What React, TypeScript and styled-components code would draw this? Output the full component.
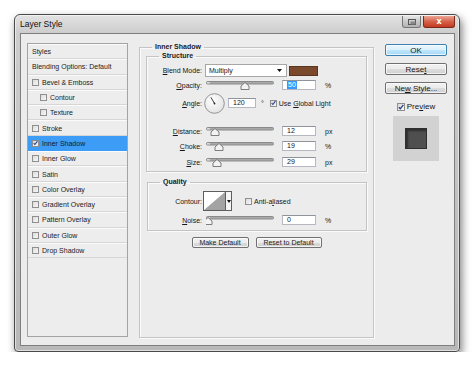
import React from "react";
import styled, { createGlobalStyle } from "styled-components";

const GlobalStyle = createGlobalStyle`
  html, body { margin: 0; padding: 0; background: #fff; }
  body { font-family: "Liberation Sans", Arial, sans-serif; color: #161616; }
  * { box-sizing: border-box; }
`;

const Page = styled.div`
  padding: 14px 0 0 14px;
`;

const Window = styled.div`
  width: 446px;
  height: 338px;
  display: flex;
  flex-direction: column;
  border: 1px solid #4a4a4a;
  border-radius: 6px 6px 4px 4px;
  background: linear-gradient(180deg, #e2e2e2 0px, #cdcdcd 18px, #b8b8b8 100%);
  box-shadow: inset 0 0 0 1px rgba(255, 255, 255, 0.55), 2px 4px 8px rgba(0, 0, 0, 0.5);
`;

const TitleBar = styled.div`
  height: 18px;
  display: flex;
  align-items: flex-start;
  padding: 0 4px 0 5px;
`;

const Title = styled.span`
  font-size: 8.5px;
  line-height: 18px;
  color: #111;
`;

const TitleButtons = styled.div`
  margin-left: auto;
  margin-top: 1px;
  display: flex;
  gap: 2px;
`;

const CaptionButton = styled.div<{ $close?: boolean }>`
  width: ${(p) => (p.$close ? "32px" : "19px")};
  height: 12px;
  border: 1px solid ${(p) => (p.$close ? "#7a2a1c" : "#777")};
  border-top: 0;
  border-radius: 0 0 3px 3px;
  background: ${(p) =>
    p.$close
      ? "linear-gradient(180deg, #eba493 0%, #d6624a 50%, #c43a22 100%)"
      : "linear-gradient(180deg, #e6e6e6 0%, #c9c9c9 50%, #b3b3b3 100%)"};
  display: flex;
  align-items: center;
  justify-content: center;
  color: #fff;
  font-family: "DejaVu Sans", sans-serif;
  font-weight: bold;
  font-size: 8px;
  line-height: 1;
`;

const Content = styled.div`
  flex: 1;
  margin: 0 4px 5px 5px;
  border: 1px solid #7f7f7f;
  background: #ececec;
  display: flex;
  align-items: flex-start;
  padding: 9px 0 0 6px;
`;

/* ---------- styles list ---------- */

const StylesPanel = styled.div`
  width: 101px;
  height: 294px;
  border: 1px solid #a3a3a3;
  background: #ededed;
  display: flex;
  flex-direction: column;
`;

const StyleRow = styled.div<{ $indent?: boolean; $selected?: boolean }>`
  height: 15.3px;
  flex: none;
  display: flex;
  align-items: center;
  gap: 3px;
  padding-left: ${(p) => (p.$indent ? "12px" : "4px")};
  font-size: 7px;
  color: ${(p) => (p.$selected ? "#0c1a3a" : "#222")};
  background: ${(p) => (p.$selected ? "#3d9cf5" : "transparent")};
  border-top: 1px solid ${(p) => (p.$selected ? "#3d9cf5" : "#fbfbfb")};
  border-bottom: 1px solid ${(p) => (p.$selected ? "#3d9cf5" : "#d6d6d6")};
`;

const Box = styled.span<{ $size?: number }>`
  width: ${(p) => p.$size ?? 7}px;
  height: ${(p) => p.$size ?? 7}px;
  flex: none;
  border: 1px solid #8f8f8f;
  background: linear-gradient(135deg, #dcdcdc 0%, #f7f7f7 100%);
  display: flex;
  align-items: center;
  justify-content: center;
`;

const CheckBox = ({ checked, size }: { checked?: boolean; size?: number }) => (
  <Box $size={size}>
    {checked && (
      <svg width="6" height="6" viewBox="0 0 6 6">
        <path d="M0.8 3.2 L2.3 4.8 L5.3 0.8" fill="none" stroke="#2b3f86" strokeWidth="1.3" />
      </svg>
    )}
  </Box>
);

/* ---------- middle panel ---------- */

const Group = styled.fieldset<{ $m?: string }>`
  margin: ${(p) => p.$m ?? "0"};
  padding: 0;
  min-width: 0;
  border: 1px solid #c4c4c4;
  box-shadow: 1px 1px 0 #fafafa, inset 1px 1px 0 #fafafa;
`;

const MainGroup = styled(Group)`
  width: 235px;
  height: 295px;
  margin-left: 11px;
  display: flex;
  flex-direction: column;
`;

const GroupTitle = styled.legend`
  margin-left: 12px;
  padding: 0 3px;
  font-size: 7px;
  line-height: 8px;
  font-weight: bold;
  color: #1a1a1a;
`;

const GroupBody = styled.div<{ $pt: number; $pb: number }>`
  display: flex;
  flex-direction: column;
  padding: ${(p) => p.$pt}px 0 ${(p) => p.$pb}px 0;
`;

const Row = styled.div<{ $h: number; $mt?: number }>`
  height: ${(p) => p.$h}px;
  margin-top: ${(p) => p.$mt ?? 0}px;
  display: flex;
  align-items: center;
`;

const Label = styled.span<{ $w?: number }>`
  width: ${(p) => p.$w ?? 56}px;
  flex: none;
  text-align: right;
  padding-right: 1px;
  font-size: 7px;
  white-space: nowrap;
`;

const Key = styled.span`
  text-decoration: underline;
  text-underline-offset: 1px;
`;

const Select = styled.div`
  margin-left: 2px;
  width: 82px;
  height: 13px;
  border: 1px solid #a7a7a7;
  background: #fff;
  display: flex;
  align-items: center;
  padding: 0 4px 0 3px;
  font-size: 7px;
  justify-content: space-between;
`;

const Swatch = styled.div<{ $color: string }>`
  margin-left: 2px;
  width: 29px;
  height: 10px;
  background: ${(p) => p.$color};
  border: 1px solid #5a3622;
`;

const SliderWrap = styled.div`
  margin-left: 3px;
  width: 68px;
  height: 10px;
  flex: none;
  display: flex;
`;

const Slider = ({ pos }: { pos: number }) => (
  <SliderWrap>
    <svg width="68" height="10" viewBox="0 0 68 10">
      <rect x="0.5" y="1.5" width="67" height="2.5" rx="1" fill="#a9a9a9" stroke="#8a8a8a" />
      <rect x="1" y="2" width="3" height="1.5" fill="#d8d8d8" />
      <path
        d={`M${pos - 4} 9.5 L${pos + 4} 9.5 L${pos + 4} 6 L${pos} 2.5 L${pos - 4} 6 Z`}
        fill="#f3f3f3"
        stroke="#707070"
        strokeWidth="0.9"
      />
    </svg>
  </SliderWrap>
);

const TextField = styled.div<{ $w?: number; $ml?: number }>`
  margin-left: ${(p) => p.$ml ?? 8}px;
  width: ${(p) => p.$w ?? 34}px;
  height: 10px;
  flex: none;
  border: 1px solid #b5b8c0;
  border-top-color: #8e929b;
  background: #fff;
  font-size: 7px;
  line-height: 8px;
  padding-left: 4px;
  display: flex;
  align-items: center;
`;

const Selected = styled.span`
  background: #3399ff;
  color: #fff;
  padding: 0 1px;
`;

const Unit = styled.span<{ $ml?: number }>`
  margin-left: ${(p) => p.$ml ?? 9}px;
  font-size: 7px;
`;

const CheckLabel = styled.label<{ $ml: number; $size?: number; $mt?: number }>`
  margin-left: ${(p) => p.$ml}px;
  margin-top: ${(p) => p.$mt ?? 0}px;
  display: flex;
  align-items: center;
  gap: 2px;
  font-size: ${(p) => p.$size ?? 7}px;
  white-space: nowrap;
`;

const Dial = styled.div`
  margin-left: 1px;
  width: 21px;
  height: 21px;
  flex: none;
  display: flex;
`;

const ContourPicker = styled.div`
  height: 20px;
  display: flex;
  border: 1px solid #5e5e5e;
  background: #fff;
`;

const ContourArrow = styled.div`
  width: 6px;
  border-left: 1px solid #5e5e5e;
  background: #f4f4f4;
  display: flex;
  align-items: center;
  justify-content: center;
`;

const ButtonRow = styled.div`
  margin-top: 6px;
  display: flex;
  justify-content: center;
  gap: 7px;
`;

const Button = styled.div<{ $w: number; $h?: number; $primary?: boolean; $fs?: number; $mt?: number }>`
  width: ${(p) => p.$w}px;
  height: ${(p) => p.$h ?? 11}px;
  margin-top: ${(p) => p.$mt ?? 0}px;
  border: 1px solid ${(p) => (p.$primary ? "#3c7fb1" : "#707070")};
  border-radius: 2px;
  background: ${(p) =>
    p.$primary
      ? "linear-gradient(180deg, #eaf6fd 0%, #d9f0fc 50%, #bee6fd 51%, #a7d9f5 100%)"
      : "linear-gradient(180deg, #f2f2f2 0%, #ebebeb 50%, #dddddd 51%, #cfcfcf 100%)"};
  box-shadow: inset 0 0 0 1px rgba(255, 255, 255, 0.7);
  display: flex;
  align-items: center;
  justify-content: center;
  font-size: ${(p) => p.$fs ?? 7}px;
  color: #1a1a1a;
  white-space: nowrap;
`;

/* ---------- right column ---------- */

const SideColumn = styled.div`
  margin-left: 11px;
  width: 62px;
  padding-top: 1px;
  display: flex;
  flex-direction: column;
  align-items: center;
`;

const PreviewBox = styled.div`
  margin-top: 5px;
  width: 46px;
  height: 45px;
  background: #d2d2d2;
  display: flex;
  align-items: center;
  justify-content: center;
`;

const PreviewSquare = styled.div`
  width: 22px;
  height: 21px;
  background: #4f4f4f;
  border: 1px solid #2e2e2e;
  box-shadow: inset 2px 2px 2px #2f2f2f;
`;

const styleItems: { name: string; indent?: boolean; box?: boolean; checked?: boolean }[] = [
  { name: "Styles" },
  { name: "Blending Options: Default" },
  { name: "Bevel & Emboss", box: true },
  { name: "Contour", box: true, indent: true },
  { name: "Texture", box: true, indent: true },
  { name: "Stroke", box: true },
  { name: "Inner Shadow", box: true, checked: true },
  { name: "Inner Glow", box: true },
  { name: "Satin", box: true },
  { name: "Color Overlay", box: true },
  { name: "Gradient Overlay", box: true },
  { name: "Pattern Overlay", box: true },
  { name: "Outer Glow", box: true },
  { name: "Drop Shadow", box: true },
];

const sliderRows = [
  { key: "D", rest: "istance:", value: "12", unit: "px", pos: 9, mt: 13 },
  { key: "C", rest: "hoke:", value: "19", unit: "%", pos: 13, mt: 5 },
  { key: "S", rest: "ize:", value: "29", unit: "px", pos: 11, mt: 6 },
];

export default function App() {
  return (
    <>
      <GlobalStyle />
      <Page>
        <Window>
          <TitleBar>
            <Title>Layer Style</Title>
            <TitleButtons>
              <CaptionButton>
                <svg width="8" height="6" viewBox="0 0 8 6">
                  <rect x="0.5" y="0.5" width="7" height="5" fill="none" stroke="#555" />
                  <rect x="2.5" y="2.5" width="5" height="3" fill="#888" />
                </svg>
              </CaptionButton>
              <CaptionButton $close>x</CaptionButton>
            </TitleButtons>
          </TitleBar>

          <Content>
            <StylesPanel>
              {styleItems.map((item) => (
                <StyleRow key={item.name} $indent={item.indent} $selected={item.checked}>
                  {item.box && <CheckBox checked={item.checked} />}
                  <span>{item.name}</span>
                </StyleRow>
              ))}
            </StylesPanel>

            <MainGroup>
              <GroupTitle>Inner Shadow</GroupTitle>

              <Group $m="1px 6px 0 6px">
                <GroupTitle>Structure</GroupTitle>
                <GroupBody $pt={4} $pb={4}>
                  <Row $h={13}>
                    <Label>
                      <Key>B</Key>lend Mode:
                    </Label>
                    <Select>
                      <span>Multiply</span>
                      <svg width="5" height="3" viewBox="0 0 5 3">
                        <path d="M0 0 L5 0 L2.5 3 Z" fill="#111" />
                      </svg>
                    </Select>
                    <Swatch $color="#7b4a2d" />
                  </Row>

                  <Row $h={10} $mt={3}>
                    <Label>
                      <Key>O</Key>pacity:
                    </Label>
                    <Slider pos={39} />
                    <TextField>
                      <Selected>50</Selected>
                    </TextField>
                    <Unit>%</Unit>
                  </Row>

                  <Row $h={20} $mt={3}>
                    <Label>
                      <Key>A</Key>ngle:
                    </Label>
                    <Dial>
                      <svg width="21" height="21" viewBox="0 0 21 21">
                        <defs>
                          <radialGradient id="dialFill" cx="40%" cy="35%" r="70%">
                            <stop offset="0%" stopColor="#ffffff" />
                            <stop offset="100%" stopColor="#e2e2e2" />
                          </radialGradient>
                        </defs>
                        <circle cx="10.5" cy="10.5" r="9.8" fill="url(#dialFill)" stroke="#8a8a8a" strokeWidth="0.9" />
                        <line x1="10.5" y1="10.5" x2="6.9" y2="4.3" stroke="#222" strokeWidth="0.9" />
                        <circle cx="10.5" cy="10.5" r="0.9" fill="#222" />
                      </svg>
                    </Dial>
                    <TextField $w={28} $ml={3}>
                      120
                    </TextField>
                    <Unit $ml={5}>°</Unit>
                    <CheckLabel $ml={6}>
                      <CheckBox checked />
                      <span>
                        Use <Key>G</Key>lobal Light
                      </span>
                    </CheckLabel>
                  </Row>

                  {sliderRows.map((r) => (
                    <Row key={r.key} $h={10} $mt={r.mt}>
                      <Label>
                        <Key>{r.key}</Key>
                        {r.rest}
                      </Label>
                      <Slider pos={r.pos} />
                      <TextField>{r.value}</TextField>
                      <Unit>{r.unit}</Unit>
                    </Row>
                  ))}
                </GroupBody>
              </Group>

              <Group $m="6px 6px 0 7px">
                <GroupTitle>Quality</GroupTitle>
                <GroupBody $pt={5} $pb={5}>
                  <Row $h={20}>
                    <Label $w={55}>Contour:</Label>
                    <ContourPicker>
                      <svg width="21" height="18" viewBox="0 0 21 18">
                        <path d="M0 18 L21 0 L21 18 Z" fill="#a3a3a3" />
                      </svg>
                      <ContourArrow>
                        <svg width="4" height="3" viewBox="0 0 4 3">
                          <path d="M0 0 L4 0 L2 3 Z" fill="#111" />
                        </svg>
                      </ContourArrow>
                    </ContourPicker>
                    <CheckLabel $ml={13}>
                      <CheckBox />
                      <span>
                        Anti-a<Key>l</Key>iased
                      </span>
                    </CheckLabel>
                  </Row>
                  <Row $h={10} $mt={4}>
                    <Label $w={55}>
                      <Key>N</Key>oise:
                    </Label>
                    <Slider pos={2} />
                    <TextField>0</TextField>
                    <Unit>%</Unit>
                  </Row>
                </GroupBody>
              </Group>

              <ButtonRow>
                <Button $w={57}>Make Default</Button>
                <Button $w={66}>Reset to Default</Button>
              </ButtonRow>
            </MainGroup>

            <SideColumn>
              <Button $w={62} $h={12} $primary $fs={8}>
                OK
              </Button>
              <Button $w={62} $h={12} $fs={8} $mt={7}>
                <span>
                  Rese<Key>t</Key>
                </span>
              </Button>
              <Button $w={62} $h={12} $fs={8} $mt={7}>
                <span>
                  Ne<Key>w</Key> Style...
                </span>
              </Button>
              <CheckLabel $ml={0} $size={8} $mt={8}>
                <CheckBox checked size={8} />
                <span>
                  Pre<Key>v</Key>iew
                </span>
              </CheckLabel>
              <PreviewBox>
                <PreviewSquare />
              </PreviewBox>
            </SideColumn>
          </Content>
        </Window>
      </Page>
    </>
  );
}
